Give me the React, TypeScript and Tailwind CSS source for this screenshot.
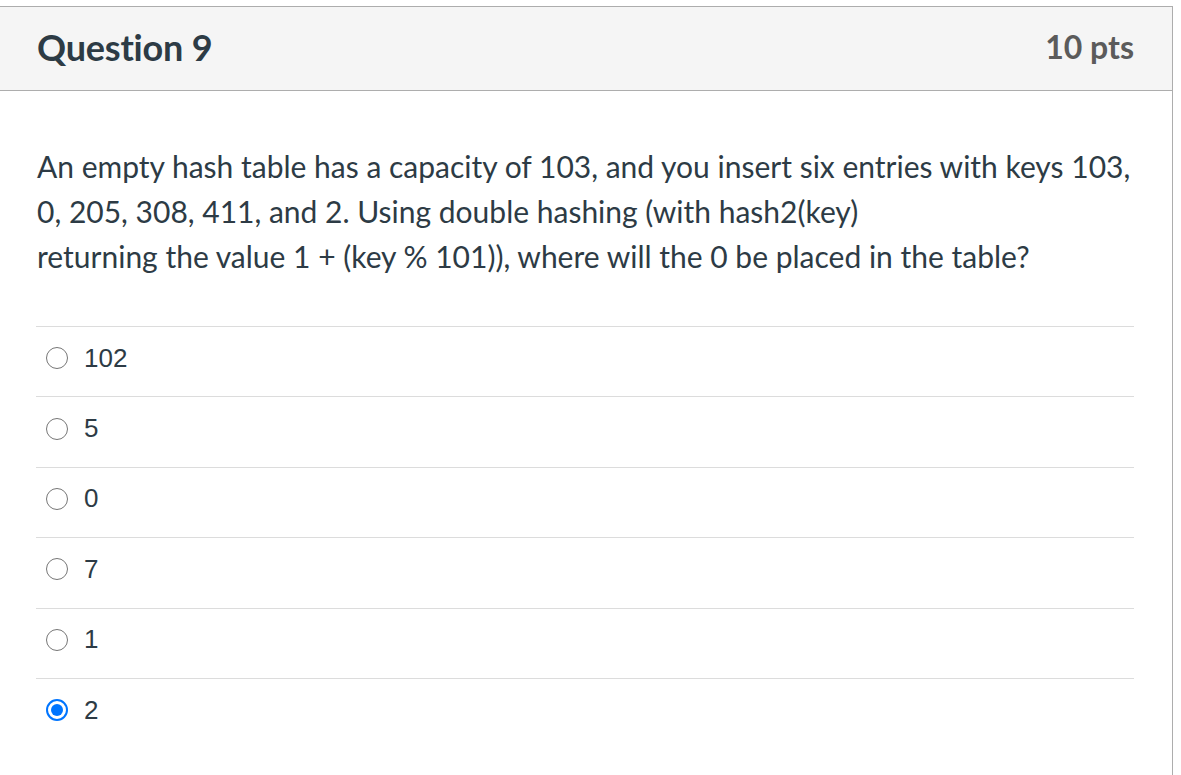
const answers = [
  { label: "102", selected: false },
  { label: "5", selected: false },
  { label: "0", selected: false },
  { label: "7", selected: false },
  { label: "1", selected: false },
  { label: "2", selected: true },
];

function Radio({ selected }: { selected: boolean }) {
  if (selected) {
    return (
      <span className="flex h-[22px] w-[22px] shrink-0 items-center justify-center rounded-full border-[2.5px] border-[#0075ff] bg-white">
        <span className="h-[12px] w-[12px] rounded-full bg-[#0075ff]" />
      </span>
    );
  }
  return <span className="h-[22px] w-[22px] shrink-0 rounded-full border-[1.5px] border-[#767676] bg-white" />;
}

export default function App() {
  return (
    <div className="min-h-[775px] bg-white pt-[6px] font-['Lato','Liberation_Sans',sans-serif] text-[#2d3b45]">
      <div className="min-h-[769px] w-[1173px] border-t border-r border-[#adadad]">
        <div className="flex h-[84px] items-center justify-between border-b border-[#adadad] bg-[#f5f5f5] pb-[4px] pl-[37px] pr-[38px]">
          <h2 className="text-[36px] font-bold tracking-[-0.2px]">Question 9</h2>
          <span className="text-[32px] font-bold text-[#5b5b5b]">10 pts</span>
        </div>

        <div className="pl-[36px] pr-[38px] pt-[53px]">
          <p className="pl-px text-[30px] leading-[45px]">
            An empty hash table has a capacity of 103, and you insert six entries with keys 103,
            <br />
            0, 205, 308, 411, and 2. Using double hashing (with hash2(key)
            <br />
            returning the value 1 + (key % 101)), where will the 0 be placed in the table?
          </p>

          <ul className="mt-[47px]">
            {answers.map((a) => (
              <li key={a.label} className="flex h-[70.4px] items-center border-t border-[#dcdcdc] pb-[7px] pl-[10px]">
                <Radio selected={a.selected} />
                <span className="ml-[16px] font-['Liberation_Sans',Arial,sans-serif] text-[26px] text-[#2d3b45]">
                  {a.label}
                </span>
              </li>
            ))}
          </ul>
        </div>
      </div>
    </div>
  );
}
